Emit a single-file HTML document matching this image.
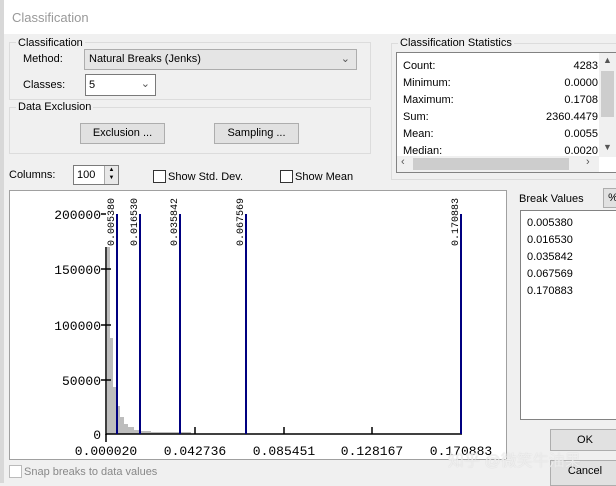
<!DOCTYPE html>
<html><head><meta charset="utf-8"><style>
*{margin:0;padding:0;box-sizing:border-box}
body{width:616px;height:483px;overflow:hidden;background:#f0f0f0;font-family:"Liberation Sans",sans-serif;font-size:11px;color:#000;position:relative}
.a{position:absolute;white-space:nowrap}
.grp{position:absolute;border:1px solid #dcdcdc}
.lbl{position:absolute;background:#f0f0f0;padding:0 2px;font-size:11px}
.btn{position:absolute;background:#e1e1e1;border:1px solid #adadad;text-align:center;font-size:11px}
.cb{position:absolute;width:13px;height:13px;border:1px solid #333;background:#fff}
</style></head><body>
<div class="a" style="left:0;top:0;width:616px;height:34px;background:#fff"></div>
<div class="a" style="left:12px;top:10px;font-size:13px;color:#999">Classification</div>
<div class="a" style="left:0;top:0;width:4px;height:483px;background:#d8d8d8"></div>

<div class="grp" style="left:9px;top:42px;width:362px;height:58px"></div>
<div class="lbl" style="left:16px;top:37px">Classification</div>
<div class="a" style="left:23px;top:53px">Method:</div>
<div class="a" style="left:84px;top:49px;width:273px;height:21px;background:#e5e5e5;border:1px solid #adadad;padding:3px 4px">Natural Breaks (Jenks)<span style="position:absolute;right:6px;top:2px;color:#555">&#8964;</span></div>
<div class="a" style="left:23px;top:79px">Classes:</div>
<div class="a" style="left:85px;top:74px;width:71px;height:22px;background:#fff;border:1px solid #7a7a7a;padding:4px 3px">5<span style="position:absolute;right:5px;top:2px;color:#555">&#8964;</span></div>

<div class="grp" style="left:9px;top:107px;width:362px;height:47px"></div>
<div class="lbl" style="left:16px;top:101px">Data Exclusion</div>
<div class="btn" style="left:80px;top:123px;width:85px;height:21px;line-height:19px">Exclusion ...</div>
<div class="btn" style="left:214px;top:123px;width:85px;height:21px;line-height:19px">Sampling ...</div>

<div class="grp" style="left:391px;top:43px;width:230px;height:137px"></div>
<div class="lbl" style="left:398px;top:37px">Classification Statistics</div>
<div class="a" style="left:396px;top:52px;width:222px;height:121px;background:#fff;border:1px solid #828282"></div>
<div class="a" style="left:403px;top:58px;line-height:17px">Count:<br>Minimum:<br>Maximum:<br>Sum:<br>Mean:<br>Median:</div>
<div class="a" style="left:520px;top:58px;width:78px;text-align:right;line-height:17px;overflow:hidden">4283<br>0.0000<br>0.1708<br>2360.4479<br>0.0055<br>0.0020</div>
<div class="a" style="left:599px;top:53px;width:17px;height:104px;background:#f0f0f0"></div>
<div class="a" style="left:601px;top:71px;width:13px;height:46px;background:#cdcdcd"></div>
<div class="a" style="left:603px;top:55px;font-size:9px;color:#555">&#9650;</div>
<div class="a" style="left:603px;top:142px;font-size:9px;color:#555">&#9660;</div>
<div class="a" style="left:397px;top:156px;width:202px;height:16px;background:#f0f0f0"></div>
<div class="a" style="left:413px;top:158px;width:156px;height:12px;background:#cdcdcd"></div>
<div class="a" style="left:401px;top:156px;color:#555">&lsaquo;</div>
<div class="a" style="left:586px;top:156px;color:#555">&rsaquo;</div>

<div class="a" style="left:9px;top:169px">Columns:</div>
<div class="a" style="left:73px;top:165px;width:46px;height:20px;background:#fff;border:1px solid #7a7a7a;padding:3px 3px">100</div>
<div class="a" style="left:104px;top:166px;width:14px;height:18px;background:#e8e8e8;border-left:1px solid #aaa;font-size:6px;line-height:8px;text-align:center">&#9650;<br>&#9660;</div>
<div class="cb" style="left:153px;top:170px"></div><div class="a" style="left:168px;top:171px">Show Std. Dev.</div>
<div class="cb" style="left:280px;top:170px"></div><div class="a" style="left:295px;top:171px">Show Mean</div>

<div class="a" style="left:9px;top:190px;width:498px;height:270px;background:#fff;border:1px solid #a0a0a0"></div>
<svg class="a" style="left:0;top:0" width="616" height="483">
<g fill="#bdbdbd">
<rect x="107" y="247" width="3" height="187"/><rect x="110" y="338" width="3" height="96"/><rect x="113" y="387" width="4" height="47"/>
<rect x="117" y="406" width="3" height="28"/><rect x="120" y="417" width="4" height="17"/><rect x="124" y="424" width="4" height="10"/>
<rect x="128" y="427" width="6" height="7"/><rect x="134" y="430" width="7" height="4"/><rect x="141" y="431" width="10" height="3"/><rect x="151" y="432" width="40" height="2"/>
</g>
<g stroke="#000" stroke-width="1.5" fill="none">
<line x1="106" y1="247" x2="106" y2="435"/><line x1="106" y1="434" x2="462" y2="434"/>
<line x1="101" y1="214" x2="106" y2="214"/><line x1="101" y1="269" x2="111" y2="269"/><line x1="101" y1="325" x2="111" y2="325"/><line x1="101" y1="380" x2="111" y2="380"/>
<line x1="106" y1="434" x2="106" y2="442"/><line x1="195" y1="427" x2="195" y2="434"/><line x1="284" y1="427" x2="284" y2="434"/><line x1="372" y1="427" x2="372" y2="434"/><line x1="461" y1="427" x2="461" y2="434"/>
</g>
<g stroke="#000080" stroke-width="2">
<line x1="117" y1="214" x2="117" y2="434"/><line x1="140" y1="214" x2="140" y2="434"/><line x1="180" y1="214" x2="180" y2="434"/><line x1="246" y1="214" x2="246" y2="434"/><line x1="461" y1="214" x2="461" y2="434"/>
</g>
<g font-family="Liberation Mono,monospace" font-size="13" text-anchor="end">
<text x="101" y="219">200000</text><text x="101" y="274">150000</text><text x="101" y="330">100000</text><text x="101" y="385">50000</text><text x="101" y="439">0</text>
</g>
<g font-family="Liberation Mono,monospace" font-size="13" text-anchor="middle">
<text x="106" y="455">0.000020</text><text x="195" y="455">0.042736</text><text x="284" y="455">0.085451</text><text x="372" y="455">0.128167</text><text x="461" y="455">0.170883</text>
</g>
<g font-family="Liberation Mono,monospace" font-size="10">
<text transform="translate(114,246) rotate(-90)">0.005380</text>
<text transform="translate(137,246) rotate(-90)">0.016530</text>
<text transform="translate(177,246) rotate(-90)">0.035842</text>
<text transform="translate(243,246) rotate(-90)">0.067569</text>
<text transform="translate(458,246) rotate(-90)">0.170883</text>
</g>
</svg>

<div class="a" style="left:519px;top:193px">Break Values</div>
<div class="btn" style="left:603px;top:188px;width:20px;height:20px;line-height:18px">%</div>
<div class="a" style="left:520px;top:210px;width:100px;height:210px;background:#fff;border:1px solid #828282"></div>
<div class="a" style="left:527px;top:215px;line-height:17px">0.005380<br>0.016530<br>0.035842<br>0.067569<br>0.170883</div>
<div class="btn" style="left:550px;top:429px;width:70px;height:22px;line-height:20px">OK</div>
<div class="btn" style="left:550px;top:460px;width:70px;height:26px;line-height:20px">Cancel</div>
<div class="a" style="left:448px;top:447px;font-size:16px;color:rgba(255,255,255,0.6);font-family:'Liberation Sans','Noto Sans CJK SC',sans-serif;text-shadow:0 0 1px #ccc">知乎 @微笑牛油果</div>

<div class="cb" style="left:9px;top:465px;border-color:#bbb"></div>
<div class="a" style="left:24px;top:466px;color:#888">Snap breaks to data values</div>
</body></html>
